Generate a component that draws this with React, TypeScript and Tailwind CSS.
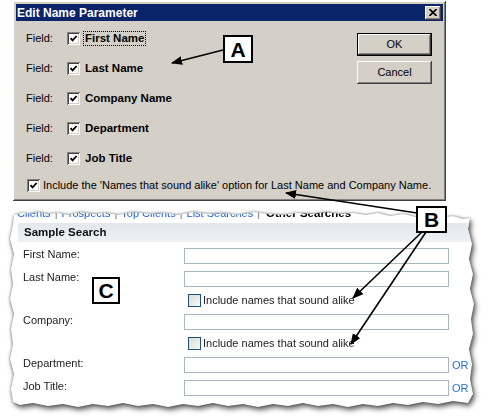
import React from 'react';

const raised =
  'shadow-[inset_-1px_-1px_#404040,inset_1px_1px_#ffffff,inset_-2px_-2px_#808080,inset_2px_2px_#d4d0c8]';

function WinCheck({ checked = true }: { checked?: boolean }) {
  return (
    <span className="flex h-[13px] w-[13px] shrink-0 items-center justify-center bg-white shadow-[inset_1px_1px_#808080,inset_-1px_-1px_#ffffff,inset_2px_2px_#404040,inset_-2px_-2px_#d4d0c8]">
      {checked && (
        <svg width="9" height="9" viewBox="0 0 9 9">
          <path d="M1.5 4.2 L3.6 6.4 L7.6 2" fill="none" stroke="#000" strokeWidth="1.8" />
        </svg>
      )}
    </span>
  );
}

function WebCheck() {
  return (
    <span className="h-[13px] w-[13px] shrink-0 border border-[#1c5180] bg-gradient-to-br from-[#dcdcd5] to-[#f7f7f4]" />
  );
}

function FieldRow({ label, focused }: { label: string; focused?: boolean }) {
  return (
    <div className="flex h-[30px] items-center">
      <span className="w-[41px] text-[11px]">Field:</span>
      <WinCheck />
      <span
        className={`ml-[3px] px-[1px] text-[11.5px] font-bold leading-[13px] ${
          focused ? 'border border-dotted border-black' : 'border border-transparent'
        }`}
      >
        {label}
      </span>
    </div>
  );
}

function WinButton({ label, isDefault }: { label: string; isDefault?: boolean }) {
  return (
    <div className={`h-[23px] w-[75px] ${isDefault ? 'border border-black' : ''}`}>
      <div className={`flex h-full w-full items-center justify-center bg-[#d4d0c8] text-[11px] ${raised}`}>
        {label}
      </div>
    </div>
  );
}

function FormRow({ label, or }: { label: string; or?: boolean }) {
  return (
    <div className="flex items-start">
      <span className="w-[161px] text-[11px] leading-[13px] text-[#222]">{label}</span>
      <span className="h-[16px] w-[265px] border border-[#a9b7c2] bg-white" />
      {or && <span className="ml-[3px] text-[11px] leading-[16px] text-[#2a6fd8]">OR</span>}
    </div>
  );
}

function SoundAlike() {
  return (
    <div className="flex h-[13px] items-center pl-[165px]">
      <WebCheck />
      <span className="ml-[2px] text-[11px] leading-[13px] text-[#222]">Include names that sound alike</span>
    </div>
  );
}

function Tag({ letter, className }: { letter: string; className: string }) {
  return (
    <div
      className={`absolute flex items-center justify-center border-2 border-black bg-white text-[21px] font-bold leading-none ${className}`}
    >
      {letter}
    </div>
  );
}

export default function App() {
  return (
    <div className="relative h-[416px] w-[491px] overflow-hidden bg-white font-['Liberation_Sans',Arial,sans-serif] text-black">
      {/* dialog */}
      <div className={`ml-[13px] mt-[1px] flex h-[200px] w-[433px] flex-col bg-[#d4d0c8] p-[3px] ${raised}`}>
        <div className="flex h-[17px] items-center justify-between bg-[#0a246a] pl-[1px] pr-[2px]">
          <span className="text-[12px] font-bold text-white">Edit Name Parameter</span>
          <span className={`flex h-[14px] w-[16px] items-center justify-center bg-[#d4d0c8] ${raised}`}>
            <svg width="8" height="7" viewBox="0 0 8 7">
              <path d="M0.5 0 L7.5 7 M7.5 0 L0.5 7" stroke="#000" strokeWidth="1.6" />
            </svg>
          </span>
        </div>

        <div className="flex">
          <div className="flex-1 pl-[10px] pt-[2px]">
            <FieldRow label="First Name" focused />
            <FieldRow label="Last Name" />
            <FieldRow label="Company Name" />
            <FieldRow label="Department" />
            <FieldRow label="Job Title" />
          </div>
          <div className="flex flex-col gap-[5px] pr-[11px] pt-[12px]">
            <WinButton label="OK" isDefault />
            <WinButton label="Cancel" />
          </div>
        </div>

        <div className="mt-[4px] flex items-center pl-[11px]">
          <WinCheck />
          <span className="ml-[3px] text-[11px]">
            Include the 'Names that sound alike' option for Last Name and Company Name.
          </span>
        </div>
      </div>

      {/* torn web page clip */}
      <div className="ml-[8px] mt-[3px] w-[470px] [filter:drop-shadow(0_0_1.5px_rgba(0,0,0,0.45))_drop-shadow(2px_3px_2.5px_rgba(0,0,0,0.6))]">
        <div className="h-[208px] bg-white [clip-path:polygon(6px_11px,15px_9px,22px_10px,30px_8px,40px_10px,50px_9px,60px_11px,72px_8px,85px_10px,98px_9px,110px_11px,125px_8px,140px_10px,155px_9px,170px_11px,185px_8px,200px_10px,215px_9px,230px_11px,245px_8px,260px_10px,275px_11px,290px_9px,305px_10px,318px_8px,332px_10px,345px_9px,358px_11px,370px_9px,382px_12px,395px_10px,408px_13px,420px_11px,432px_14px,445px_12px,455px_15px,462px_14px,460px_25px,464px_40px,461px_55px,465px_70px,462px_85px,466px_100px,463px_115px,465px_130px,461px_145px,464px_160px,462px_175px,465px_190px,460px_199px,445px_197px,430px_200px,415px_198px,400px_201px,385px_199px,370px_202px,355px_200px,340px_203px,325px_200px,310px_202px,295px_199px,280px_202px,265px_200px,250px_203px,235px_200px,220px_202px,205px_199px,190px_202px,175px_200px,160px_203px,145px_200px,130px_202px,115px_199px,100px_202px,85px_200px,70px_203px,55px_200px,40px_202px,25px_199px,12px_201px,5px_198px,3px_185px,6px_170px,2px_155px,5px_140px,3px_125px,6px_110px,2px_95px,5px_80px,3px_65px,6px_50px,2px_35px,5px_20px)]">
          <div className="flex items-center gap-[4px] pl-[9px] pt-[3px] text-[11px] leading-[13px]">
            <span className="text-[#1f5fd0]">Clients</span>
            <span className="text-[#777]">|</span>
            <span className="text-[#1f5fd0]">Prospects</span>
            <span className="text-[#777]">|</span>
            <span className="text-[#1f5fd0]">Top Clients</span>
            <span className="text-[#777]">|</span>
            <span className="text-[#1f5fd0]">List Searches</span>
            <span className="text-[#777]">|</span>
            <span className="ml-[2px] text-[11.5px] font-bold">Other Searches</span>
          </div>

          <div className="ml-[10px] mt-[3px] flex h-[19px] w-[452px] items-center bg-gradient-to-b from-[#e4e8ed] to-[#eef1f4] pl-[6px] text-[11.5px] font-bold text-[#111]">
            Sample Search
          </div>

          <div className="mt-[6px] flex flex-col gap-[7px] pl-[15px]">
            <FormRow label="First Name:" />
            <FormRow label="Last Name:" />
            <SoundAlike />
            <FormRow label="Company:" />
            <SoundAlike />
            <FormRow label="Department:" or />
            <FormRow label="Job Title:" or />
          </div>
        </div>
      </div>

      {/* callouts */}
      <svg className="pointer-events-none absolute inset-0" width="491" height="416" viewBox="0 0 491 416">
        <defs>
          <marker id="head" viewBox="0 0 10 10" refX="9" refY="5" markerWidth="7" markerHeight="7" orient="auto">
            <path d="M0 1 L10 5 L0 9 Z" fill="#000" />
          </marker>
        </defs>
        <line x1="223" y1="50" x2="172" y2="63" stroke="#000" strokeWidth="1.6" markerEnd="url(#head)" />
        <line x1="417" y1="213" x2="286" y2="193" stroke="#000" strokeWidth="1.6" markerEnd="url(#head)" />
        <line x1="422" y1="232" x2="353" y2="298" stroke="#000" strokeWidth="1.6" markerEnd="url(#head)" />
        <line x1="426" y1="232" x2="351" y2="344" stroke="#000" strokeWidth="1.6" markerEnd="url(#head)" />
      </svg>
      <Tag letter="A" className="left-[223px] top-[35px] h-[28px] w-[30px]" />
      <Tag letter="B" className="left-[416px] top-[206px] h-[27px] w-[31px]" />
      <Tag letter="C" className="left-[92px] top-[277px] h-[27px] w-[28px]" />
    </div>
  );
}
